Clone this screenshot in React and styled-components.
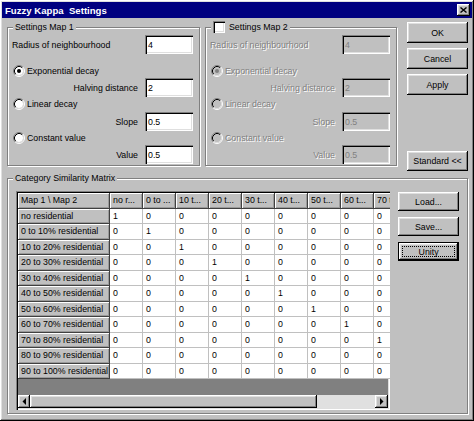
import React from 'react';
import styled, { createGlobalStyle, css } from 'styled-components';

const GlobalStyle = createGlobalStyle`
  body {
    margin: 0;
    background: #c0c0c0;
  }
  * {
    box-sizing: border-box;
  }
`;

const raised = css`
  box-shadow: inset -1px -1px 0 #000, inset 1px 1px 0 #fff,
    inset -2px -2px 0 #808080, inset 2px 2px 0 #dfdfdf;
`;

const sunken = css`
  box-shadow: inset 1px 1px 0 #808080, inset 2px 2px 0 #000,
    inset -1px -1px 0 #fff, inset -2px -2px 0 #dfdfdf;
`;

const StyledWindow = styled.div`
  background: #c0c0c0;
  color: #000;
  display: flex;
  flex-direction: column;
  font-family: 'Liberation Sans', Arial, sans-serif;
  font-size: 8.8px;
  height: 421px;
  padding: 2px;
  width: 474px;
  ${raised};
`;

const StyledTitleBar = styled.div`
  align-items: center;
  background: #000080;
  color: #fff;
  display: flex;
  font-size: 9.6px;
  font-weight: bold;
  height: 16px;
  justify-content: space-between;
  padding: 0 2px 0 3px;
`;

const StyledCloseButton = styled.div`
  align-items: center;
  background: #c0c0c0;
  display: flex;
  height: 12px;
  justify-content: center;
  width: 13px;
  ${raised};
`;

const StyledBody = styled.div`
  display: flex;
  flex-direction: column;
  padding: 4px 4px 0 5px;
`;

const StyledTopRow = styled.div`
  display: flex;
  height: 149px;
`;

const StyledGroup = styled.div`
  border: 1px solid #808080;
  box-shadow: 1px 1px 0 #fff, inset 1px 1px 0 #fff;
  position: relative;
  width: ${(p) => p.$width}px;
  margin-left: ${(p) => p.$gap || 0}px;
  margin-top: ${(p) => p.$top || 0}px;
  align-self: flex-start;
`;

const StyledLegend = styled.div`
  align-items: center;
  background: #c0c0c0;
  display: flex;
  gap: 4px;
  left: 5px;
  line-height: 12px;
  padding: 0 2px;
  position: absolute;
  top: -7px;
`;

const StyledSettingsBody = styled.div`
  display: flex;
  flex-direction: column;
  padding: 7px 0 1px;
`;

const StyledField = styled.div`
  align-items: center;
  display: flex;
  gap: 7px;
  height: 19px;
  justify-content: flex-end;
  margin-top: ${(p) => p.$top || 0}px;
  padding: 0 6px 0 4px;
`;

const StyledLabel = styled.span`
  flex: ${(p) => (p.$stretch ? 1 : 'none')};
  white-space: nowrap;
  ${(p) =>
    p.$disabled &&
    css`
      color: #808080;
      text-shadow: 1px 1px 0 #fff;
    `}
`;

const StyledInput = styled.div`
  align-items: center;
  background: ${(p) => (p.$disabled ? '#c0c0c0' : '#fff')};
  color: ${(p) => (p.$disabled ? '#808080' : '#000')};
  display: flex;
  height: 19px;
  padding-left: 3px;
  width: 48px;
  ${sunken};
`;

const StyledRadioRow = styled.div`
  align-items: center;
  display: flex;
  gap: 2px;
  height: 14px;
  margin-top: ${(p) => p.$top || 0}px;
  padding-left: 5px;
`;

const StyledCheckbox = styled.span`
  background: #fff;
  display: inline-block;
  height: 12px;
  width: 12px;
  ${sunken};
`;

const StyledButtonColumn = styled.div`
  display: flex;
  flex-direction: column;
  gap: ${(p) => p.$gap}px;
  margin-left: ${(p) => p.$left}px;
  margin-top: ${(p) => p.$top || 0}px;
  width: 61px;
`;

const StyledButton = styled.div`
  align-items: center;
  background: #c0c0c0;
  display: flex;
  flex: none;
  height: ${(p) => p.$height || 19}px;
  justify-content: center;
  margin-top: ${(p) => (p.$pushed ? 'auto' : '0')};
  position: relative;
  ${raised};
  ${(p) =>
    p.$focused &&
    css`
      box-shadow: inset 0 0 0 1px #000, inset -2px -2px 0 #000,
        inset 2px 2px 0 #fff, inset -3px -3px 0 #808080,
        inset 3px 3px 0 #dfdfdf;
      &::after {
        border: 1px dotted #000;
        content: '';
        inset: 4px;
        position: absolute;
      }
    `}
`;

const StyledMatrixGroupBody = styled.div`
  display: flex;
  padding: 12px 8px 3px;
`;

const StyledGrid = styled.div`
  background: #808080;
  display: flex;
  flex-direction: column;
  height: 219px;
  overflow: hidden;
  padding: 2px;
  width: 375px;
  ${sunken};
`;

const StyledCells = styled.div`
  display: grid;
  grid-auto-rows: 15.5px;
  grid-template-columns: 92px repeat(9, 33px);
  width: max-content;
`;

const StyledCell = styled.div`
  background: ${(p) => (p.$fixed ? '#c0c0c0' : '#fff')};
  border-bottom: 1px solid ${(p) => (p.$fixed ? '#404040' : '#c0c0c0')};
  border-right: 1px solid ${(p) => (p.$fixed ? '#404040' : '#c0c0c0')};
  box-shadow: ${(p) =>
    p.$fixed ? 'inset 1px 1px 0 #fff, inset -1px -1px 0 #9a9a9a' : 'none'};
  line-height: 14.5px;
  overflow: hidden;
  padding-left: 3px;
  white-space: nowrap;
`;

const StyledFiller = styled.div`
  flex: 1;
`;

const StyledScrollbar = styled.div`
  background: #e0e0e0;
  display: flex;
  flex: none;
  height: 13px;
`;

const StyledScrollButton = styled.div`
  align-items: center;
  background: #c0c0c0;
  display: flex;
  flex: none;
  justify-content: center;
  width: ${(p) => p.$width}px;
  ${raised};
`;

const Radio = ({ checked, disabled }) => (
  <svg width="12" height="12" viewBox="0 0 12 12">
    <circle cx="6" cy="6" r="4" fill={disabled ? '#c0c0c0' : '#fff'} />
    <path d="M2.11 9.89A5.5 5.5 0 0 1 9.89 2.11" stroke="#808080" fill="none" />
    <path d="M9.89 2.11A5.5 5.5 0 0 1 2.11 9.89" stroke="#fff" fill="none" />
    <path d="M2.82 9.18A4.5 4.5 0 0 1 9.18 2.82" stroke="#000" fill="none" />
    <path d="M9.18 2.82A4.5 4.5 0 0 1 2.82 9.18" stroke="#dfdfdf" fill="none" />
    {checked && <circle cx="6" cy="6" r="2" fill={disabled ? '#808080' : '#000'} />}
  </svg>
);

const Arrow = ({ dir }) => (
  <svg width="4" height="7" viewBox="0 0 4 7">
    <polygon points={dir === 'left' ? '4,0 4,7 0.5,3.5' : '0,0 0,7 3.5,3.5'} fill="#000" />
  </svg>
);

const SettingsPanel = ({ disabled }) => (
  <StyledSettingsBody>
    <StyledField>
      <StyledLabel $stretch $disabled={disabled}>
        Radius of neighbourhood
      </StyledLabel>
      <StyledInput $disabled={disabled}>4</StyledInput>
    </StyledField>
    <StyledRadioRow $top={10}>
      <Radio checked disabled={disabled} />
      <StyledLabel $disabled={disabled}>Exponential decay</StyledLabel>
    </StyledRadioRow>
    <StyledField>
      <StyledLabel $disabled={disabled}>Halving distance</StyledLabel>
      <StyledInput $disabled={disabled}>2</StyledInput>
    </StyledField>
    <StyledRadioRow>
      <Radio disabled={disabled} />
      <StyledLabel $disabled={disabled}>Linear decay</StyledLabel>
    </StyledRadioRow>
    <StyledField $top={1}>
      <StyledLabel $disabled={disabled}>Slope</StyledLabel>
      <StyledInput $disabled={disabled}>0.5</StyledInput>
    </StyledField>
    <StyledRadioRow>
      <Radio disabled={disabled} />
      <StyledLabel $disabled={disabled}>Constant value</StyledLabel>
    </StyledRadioRow>
    <StyledField>
      <StyledLabel $disabled={disabled}>Value</StyledLabel>
      <StyledInput $disabled={disabled}>0.5</StyledInput>
    </StyledField>
  </StyledSettingsBody>
);

const categories = [
  'no residential',
  '0 to 10% residential',
  '10 to 20% residential',
  '20 to 30% residential',
  '30 to 40% residential',
  '40 to 50% residential',
  '50 to 60% residential',
  '60 to 70% residential',
  '70 to 80% residential',
  '80 to 90% residential',
  '90 to 100% residential',
];

// only the columns that fit in the visible part of the grid
const headers = [
  'no r...',
  '0 to ...',
  '10 t...',
  '20 t...',
  '30 t...',
  '40 t...',
  '50 t...',
  '60 t...',
  '70 t',
];

const App = () => (
  <>
    <GlobalStyle />
    <StyledWindow>
      <StyledTitleBar>
        <span>Fuzzy Kappa&nbsp; Settings</span>
        <StyledCloseButton>
          <svg width="7" height="6" viewBox="0 0 7 6">
            <path d="M0.5 0.5L6.5 5.5M6.5 0.5L0.5 5.5" stroke="#000" strokeWidth="1.4" />
          </svg>
        </StyledCloseButton>
      </StyledTitleBar>

      <StyledBody>
        <StyledTopRow>
          <StyledGroup $width={193} $top={5}>
            <StyledLegend>Settings Map 1</StyledLegend>
            <SettingsPanel />
          </StyledGroup>

          <StyledGroup $width={192} $top={5} $gap={5}>
            <StyledLegend>
              <StyledCheckbox />
              Settings Map 2
            </StyledLegend>
            <SettingsPanel disabled />
          </StyledGroup>

          <StyledButtonColumn $gap={5} $left={10}>
            <StyledButton $height={21}>OK</StyledButton>
            <StyledButton $height={21}>Cancel</StyledButton>
            <StyledButton $height={21}>Apply</StyledButton>
            <StyledButton $height={20} $pushed>
              Standard &lt;&lt;
            </StyledButton>
          </StyledButtonColumn>
        </StyledTopRow>

        <StyledGroup $width={461} $top={7}>
          <StyledLegend>Category Similarity Matrix</StyledLegend>
          <StyledMatrixGroupBody>
            <StyledGrid>
              <StyledCells>
                <StyledCell $fixed>Map 1 \ Map 2</StyledCell>
                {headers.map((h) => (
                  <StyledCell key={h} $fixed>
                    {h}
                  </StyledCell>
                ))}
                {categories.map((name, row) => (
                  <React.Fragment key={name}>
                    <StyledCell $fixed>{name}</StyledCell>
                    {headers.map((_, col) => (
                      <StyledCell key={col}>{row === col ? 1 : 0}</StyledCell>
                    ))}
                  </React.Fragment>
                ))}
              </StyledCells>
              <StyledFiller />
              <StyledScrollbar>
                <StyledScrollButton $width={12}>
                  <Arrow dir="left" />
                </StyledScrollButton>
                <StyledScrollButton $width={287} />
                <StyledFiller />
                <StyledScrollButton $width={13}>
                  <Arrow dir="right" />
                </StyledScrollButton>
              </StyledScrollbar>
            </StyledGrid>

            <StyledButtonColumn $gap={6} $left={8} $top={1}>
              <StyledButton>Load...</StyledButton>
              <StyledButton>Save...</StyledButton>
              <StyledButton $focused>Unity</StyledButton>
            </StyledButtonColumn>
          </StyledMatrixGroupBody>
        </StyledGroup>
      </StyledBody>
    </StyledWindow>
  </>
);

export default App;
